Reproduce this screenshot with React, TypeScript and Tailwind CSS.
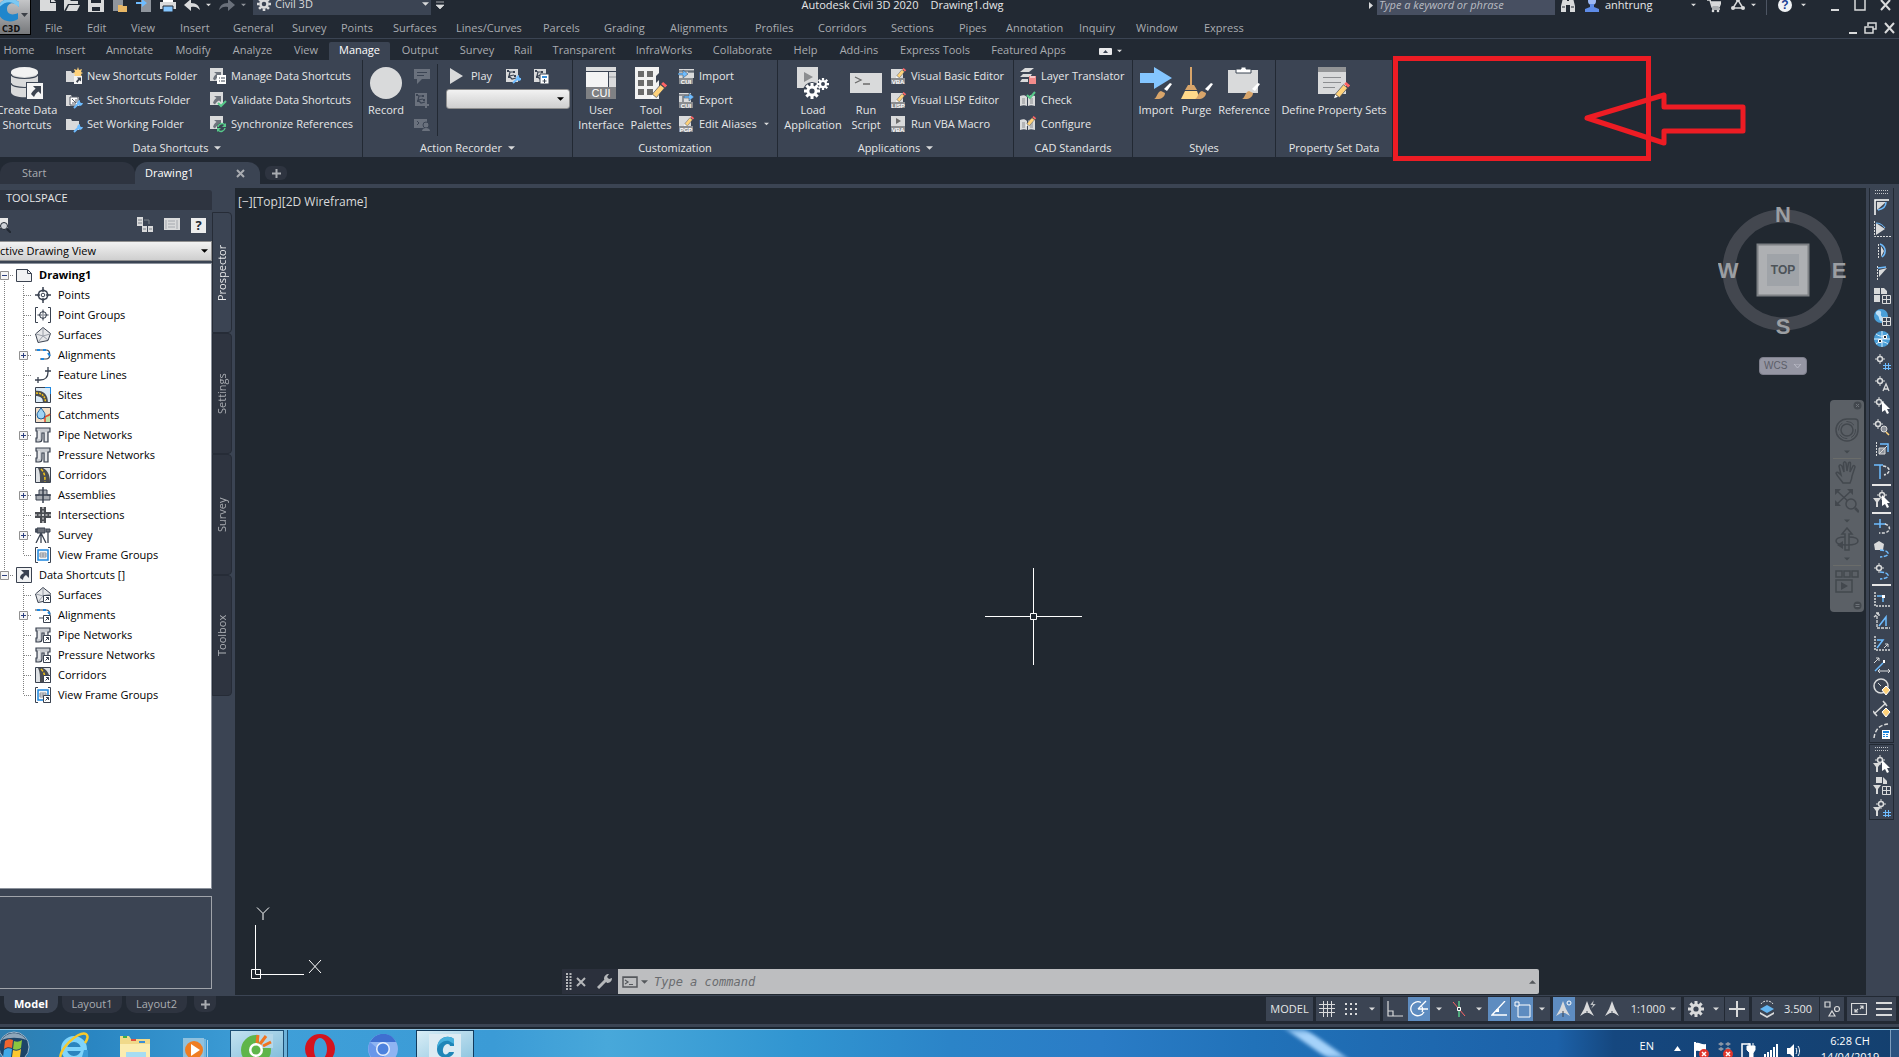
import type { ReactNode } from "react";

const LIGHT = "#d9dadb";
const BLUE = "#6ebcff";
const YELLOW = "#ffd27a";
const GREEN = "#57c98a";
const RED = "#ff6464";
const BROWN = "#d8a56a";
const PANEL = "#3b4453";
const INK = "#3a4250";

type SvgProps = { w?: number; h?: number; box?: string; children: ReactNode; className?: string };

function Svg({ w = 16, h = w, box, children, className = "shrink-0" }: SvgProps) {
  return (
    <svg width={w} height={h} viewBox={box ?? `0 0 ${w} ${h}`} fill="none" className={className} aria-hidden="true">
      {children}
    </svg>
  );
}

function Caret({ color = LIGHT, w = 7 }: { color?: string; w?: number }) {
  return (
    <Svg w={w} h={4} box="0 0 8 4">
      <path d="M0 0h8L4 4z" fill={color} />
    </Svg>
  );
}

/* shared icon parts */

const Pencil = ({ x = 0, y = 0, s = 1 }) => (
  <g transform={`translate(${x} ${y}) scale(${s})`}>
    <path d="M1 9 0 12l3-1z" fill="#fff" />
    <path d="M1 9 7 2l3 2.500-6 7z" fill={YELLOW} stroke={PANEL} strokeWidth=".5" />
    <path d="m7.500 1.500 1.500-1.500 3 2.500-1.500 1.500z" fill={RED} />
  </g>
);

const Wrench = ({ x = 0, y = 0 }) => (
  <g transform={`translate(${x} ${y})`}>
    <path d="M0 8l4-4" stroke={BLUE} strokeWidth="2" />
    <path d="M3 3l1-2 2-1v2l1 1h2l-1 2-2 1-2-1z" fill={BLUE} />
  </g>
);

const Brush = ({ x = 0, y = 0 }) => (
  <g transform={`translate(${x} ${y})`}>
    <path d="M10 6 16 0l2 1-5 7z" fill="#fff" />
    <path d="M0 16c3-1 3-7 7-8l4 2c0 4-4 7-11 6z" fill={BROWN} />
  </g>
);

const Shortcut = ({ x = 0, y = 0, s = 1 }) => (
  <g transform={`translate(${x} ${y}) scale(${s})`}>
    <path d="M0 0h8v8H0z" fill="#f4f4f4" />
    <path d="M3 1.500h4v4L5.700 4.300C4.500 5 4 6 3.500 7L2 5.500C2.500 4.500 3.500 3.500 4.300 2.900z" fill="#3d4450" />
  </g>
);

const Tag = ({ text, w = 16 }: { text: string; w?: number }) => (
  <>
    <path d={`M1 10h${w - 2}v6H1z`} fill="#8b8d90" />
    <text x={w / 2} y="15.500" fontSize="6" fontWeight="700" textAnchor="middle" fill="#fff" fontFamily="Liberation Sans">
      {text}
    </text>
  </>
);

const Folder = () => <path d="M0 3h5l1 2h7v9H0z" fill={LIGHT} />;
const Sheet = () => <path d="M0 0h13v13H0z" fill={LIGHT} />;
const RefArrow = () => <path d="M4 4h7v6L9 8.500c-2 1-3 2-4 4L3 11c1-3 2-4 3.500-5z" fill="#6e747d" />;
const Macro = ({ color = LIGHT }) => (
  <>
    <path d="M1 1h12v13H1z" fill={color} />
    <path d="M3 3l2 1 4 0M5 4l-1 4 5-1M4 8l3 3 4-1" stroke={PANEL} strokeWidth="1.200" />
    <path d="M2 2h2v2H2zM8 3h2v2H8zM3 8h2v2H3zM9 7h2v2H9z" fill={PANEL} />
  </>
);
const Book = () => (
  <>
    <path d="M0 4c3-1 5-1 7 1v9c-2-1-4-1-7 0zM15 4c-3-1-5-1-7 1v9c2-1 4-1 7 0z" fill={LIGHT} />
    <path d="M2 7h3M2 9h3M2 11h3M10 7h3M10 9h3M10 11h3" stroke="#8b8d90" />
  </>
);
const Gear = ({ x = 8, y = 8, s = 1, fill = LIGHT, hole = PANEL }) => (
  <g transform={`translate(${x} ${y}) scale(${s})`}>
    <path
      d="M-1.500-8h3v3h-3zM-1.500 5h3v3h-3zM-8-1.500h3v3h-3zM5-1.500h3v3H5zM-6.700-4.600l2.100-2.100 2.100 2.100-2.100 2.100zM2.500-4.600l2.100-2.100 2.100 2.100-2.100 2.100zM-6.700 4.600l2.100 2.100 2.100-2.100-2.100-2.100zM2.500 4.600l2.100 2.100 2.100-2.100-2.100-2.100z"
      fill={fill}
    />
    <circle r="5.500" fill={fill} />
    <circle r="2.600" fill={hole} />
  </g>
);

const small: Record<string, ReactNode> = {
  newFolder: (
    <>
      <Folder />
      <path d="m12-1 1 3 3-1-1 3 2 1-2 1 1 3-3-1-1 3-1-3-3 1 1-3-2-1 2-1-1-3 3 1z" fill={YELLOW} />
      <Shortcut x={8} y={8} />
    </>
  ),
  setFolder: (
    <>
      <Folder />
      <path d="M4 5h8v8H4z" fill="#fff" stroke="#555b66" />
      <path d="M6 7l4 4M10 7v4H6" stroke="#555b66" />
      <Wrench x={8} y={8} />
    </>
  ),
  workFolder: (
    <>
      <Folder />
      <Wrench x={8} y={8} />
    </>
  ),
  manage: (
    <>
      <Sheet />
      <RefArrow />
      <path d="M7 7h9v9H7z" fill="#fff" />
      <path d="M9 10h1M11 10h4M9 13h1M11 13h4" stroke={PANEL} />
    </>
  ),
  validate: (
    <>
      <Sheet />
      <RefArrow />
      <path d="m8 11 3 3 5-5" stroke={GREEN} strokeWidth="2" />
    </>
  ),
  sync: (
    <>
      <Sheet />
      <RefArrow />
      <circle cx="11.500" cy="11.500" r="4.500" fill={PANEL} />
      <path d="M8 11a4 4 0 0 1 7-2M15 12a4 4 0 0 1-7 2" stroke={GREEN} strokeWidth="1.500" />
      <path d="M16 7v4h-4zM7 16v-4h4z" fill={GREEN} />
    </>
  ),
  comment: (
    <>
      <path d="M0 1h16v10H8l-5 5v-5H0z" fill="#6a717d" />
      <path d="M3 4.500h10M3 7.500h7" stroke={PANEL} />
    </>
  ),
  macroAdd: (
    <>
      <Macro color="#6a717d" />
      <path d="M12 10v6M9 13h6" stroke="#6a717d" strokeWidth="2" />
    </>
  ),
  userMsg: (
    <>
      <path d="M0 3h13v9H0z" fill="#6a717d" />
      <path d="m3 5 2 2-2 2" stroke={PANEL} />
      <circle cx="12" cy="9" r="3" fill="#6a717d" stroke={PANEL} />
      <path d="M8 15c0-4 8-4 8 0z" fill="#6a717d" />
    </>
  ),
  macroEdit: (
    <>
      <Macro />
      <Wrench x={8} y={7} />
    </>
  ),
  macroPrefs: (
    <>
      <Macro />
      <path d="M7 6h9v10H7z" fill="#fff" stroke={PANEL} />
      <path d="M9 8h5v2H9z" fill="#3b8fd6" />
      <path d="M11.500 11v4M9.500 13h4" stroke={PANEL} />
    </>
  ),
  cuiImport: (
    <>
      <path d="M1 1h15v9H1z" fill={LIGHT} />
      <path d="M1 3h15M10 4h6" stroke={PANEL} />
      <path d="M0 5h5V2l5 4-5 4V7H0z" fill={BLUE} stroke={PANEL} strokeWidth=".5" />
      <Tag text="CUI" />
    </>
  ),
  cuiExport: (
    <>
      <path d="M1 1h12v9H1z" fill={LIGHT} />
      <path d="M1 3h12M5 4v6" stroke={PANEL} />
      <path d="M6 4h5V1l5 4-5 4V6H6z" fill={BLUE} stroke={PANEL} strokeWidth=".5" />
      <Tag text="CUI" />
    </>
  ),
  aliases: (
    <>
      <path d="M1 0h12v10H1z" fill={LIGHT} />
      <Pencil x={6} y={0} s={0.85} />
      <Tag text="PGP" />
    </>
  ),
  vbaEdit: (
    <>
      <path d="M1 1h12v9H1z" fill={LIGHT} />
      <Pencil x={6} y={0} s={0.85} />
      <Tag text="VBA" />
    </>
  ),
  lispEdit: (
    <>
      <path d="M1 1h12v9H1z" fill={LIGHT} />
      <Pencil x={6} y={0} s={0.85} />
      <Tag text="LISP" />
    </>
  ),
  vbaRun: (
    <>
      <path d="M1 0h14v10H1z" fill={LIGHT} />
      <path d="m6 2 5 3-5 3z" fill="#6e6e6e" />
      <Tag text="VBA" />
    </>
  ),
  layers: (
    <>
      <path d="M5 0h9L9 4H0zM3 6h9l-2 3H0zM2 11h6v3H0z" fill={LIGHT} />
      <path d="M9 8h7v8H9z" fill="#f28b8b" />
      <path d="M10 9h5" stroke="#fff" />
    </>
  ),
  check: (
    <>
      <Book />
      <path d="m7 3 3 3 5-6" stroke={GREEN} strokeWidth="2" />
    </>
  ),
  configure: (
    <>
      <Book />
      <Pencil x={6} y={0} s={0.85} />
    </>
  ),
};

const large: Record<string, ReactNode> = {
  database: (
    <>
      <path d="M0 5v20c0 7 27 7 27 0V5z" fill={LIGHT} />
      <ellipse cx="13.500" cy="5" rx="13.500" ry="5" fill="#f2f2f2" />
      <path d="M0 7c0 6 27 6 27 0M0 16c0 6 27 6 27 0" stroke={PANEL} strokeWidth="1.200" />
      <path d="M15 15h17v17H15z" fill={PANEL} />
      <Shortcut x={16} y={16} s={2} />
    </>
  ),
  record: <circle cx="16" cy="16" r="16" fill={LIGHT} />,
  cui: (
    <>
      <path d="M1 0h30v4H1zM24 5h7v15h-7z" fill={LIGHT} />
      <path d="M1 5h22v15H1z" fill="#f4f4f4" />
      <path d="M24 10h7" stroke="#9a9da1" />
      <path d="M1 20h30v12H1z" fill="#7f8184" />
      <text x="16" y="30" fontSize="11" textAnchor="middle" fill="#fff" fontFamily="Liberation Sans">
        CUI
      </text>
    </>
  ),
  palettes: (
    <>
      <path d="M0 0h24v32H0z" fill="#f2f2f2" />
      <path
        d="M3 4h6v6H3zM12 4h6v6h-6zM3 13h6v6H3zM12 13h6v6h-6zM3 22h6v6H3zM12 22h6v6h-6z"
        fill="#6b6b6b"
      />
      <path d="M24 6v7l-3 3V9z" fill={PANEL} />
      <Pencil x={16} y={15} s={1.35} />
    </>
  ),
  loadApp: (
    <>
      <path d="M0 0h21v21H0z" fill={LIGHT} />
      <path d="m7 5 9 5-9 5z" fill="#8b8d90" />
      <circle cx="15" cy="24" r="9" fill={PANEL} />
      <Gear x={15} y={24} s={1} fill="#fff" />
      <Gear x={26} y={17} s={0.75} fill="#fff" />
    </>
  ),
  script: (
    <>
      <path d="M0 6h32v20H0z" fill={LIGHT} />
      <path d="m5 10 6 3-6 3M13 17h7" stroke="#6b6b6b" strokeWidth="1.300" />
    </>
  ),
  styleImport: (
    <>
      <path d="M0 6h14V0l18 11-18 11v-6H0z" fill="#84c6ff" />
      <Brush x={14} y={16} />
    </>
  ),
  purge: (
    <>
      <path d="M9 0h2v18H9z" fill={BROWN} />
      <path d="M7 18h6l3 5H4z" fill={BROWN} />
      <path d="M4 24h12l3 8H0z" fill="#ffd98a" />
      <Brush x={14} y={16} />
    </>
  ),
  reference: (
    <>
      <path d="M0 3h30v23H0z" fill={LIGHT} />
      <path d="M8 2h5V0h5v2h5v4H8z" fill="#fff" stroke={PANEL} />
      <Brush x={14} y={16} />
    </>
  ),
  propSets: (
    <>
      <path d="M0 0h28v27H0z" fill={LIGHT} />
      <path d="M0 0h28v5H0z" fill="#929496" />
      <path d="M5 10.500h18M5 15.500h18M5 20.500h12" stroke="#8b8d90" />
      <Pencil x={16} y={15} s={1.35} />
    </>
  ),
};

/* title bar */

const quick: [string, ReactNode][] = [
  ["New", <path key="n" d="M0 0h10v6h6v8H0zM11 0l5 5h-5z" fill={LIGHT} />],
  ["Open", <path key="o" d="M0 14V2h5l2 2h7v3H4zM5 8h11l-3 6H2z" fill={LIGHT} />],
  ["Save", <path key="s" d="M0 0h16v15H0zM3 1v5h10V1zM4 10v4h8v-4z" fill={LIGHT} fillRule="evenodd" />],
  [
    "Save As",
    <g key="a">
      <path d="M1 0h10v14H1z" fill="#8f959d" />
      <path d="M6 8h4l1 1h4v6H6z" fill="#e9b765" />
    </g>,
  ],
  [
    "Open from Web",
    <g key="w">
      <path d="M5 0h10v15H5z" fill="#8f959d" />
      <path d="M0 5h6V2l5 4-5 4V7H0z" fill={BLUE} />
    </g>,
  ],
  [
    "Plot",
    <g key="p">
      <path d="M3 0h10v5H3z" fill="#fff" />
      <path d="M0 5h16v7H0z" fill={LIGHT} />
      <path d="M3 9h10v6H3z" fill="#84c6ff" stroke="#222933" />
    </g>,
  ],
];

function TitleBar() {
  return (
    <div className="flex h-6 items-center">
      <div className="ml-[9px] flex items-center gap-2">
        {quick.map(([name, art]) => (
          <button key={name} aria-label={name}>
            <Svg>{art}</Svg>
          </button>
        ))}
      </div>
      <button aria-label="Undo" className="ml-2 flex items-center gap-[6px]">
        <Svg>
          <path d="M7 2v4c6 0 8 3 9 7-3-3-5-4-9-3v4L0 8z" fill={LIGHT} />
        </Svg>
        <Caret w={5} />
      </button>
      <button aria-label="Redo" className="ml-2 flex items-center gap-[6px]">
        <Svg>
          <path d="M9 2v4c-6 0-8 3-9 7 3-3 5-4 9-3v4l7-6z" fill="#6a707a" />
        </Svg>
        <Caret w={5} color="#8d9198" />
      </button>
      <label className="relative ml-[7px] flex h-[22px] w-[178px] items-center self-start bg-[#3b4453] pl-1">
        <Svg w={14} box="0 0 16 16">
          <Gear />
        </Svg>
        <select aria-label="Workspace" className="w-full appearance-none bg-transparent pl-1 text-[#d9dadb]">
          <option>Civil 3D</option>
        </select>
        <span className="absolute right-[2px]">
          <Caret />
        </span>
      </label>
      <button aria-label="Customize Quick Access Toolbar" className="ml-[5px]">
        <Svg w={8} h={8}>
          <path d="M0 1h8M0 4h8L4 8z" fill={LIGHT} stroke={LIGHT} strokeWidth=".7" />
        </Svg>
      </button>
      <h1 className="flex flex-1 justify-center gap-3 pr-2 text-[#e6e7e8]">
        <span>Autodesk Civil 3D 2020</span>
        <span>Drawing1.dwg</span>
      </h1>
      <Svg w={4} h={7} className="mr-1 shrink-0">
        <path d="m0 0 4 3.500L0 7z" fill={LIGHT} />
      </Svg>
      <input
        aria-label="Search"
        placeholder="Type a keyword or phrase"
        className="h-[22px] w-[178px] self-start bg-[#474f61] px-[2px] italic placeholder:text-[#b9bcc2]"
      />
      <button aria-label="Find" className="ml-[6px]">
        <Svg w={14} h={16}>
          <path d="M2 1h4v3h2V1h4l2 8v6H9V8H5v7H0V9z" fill={LIGHT} />
          <path d="M1 10h3M10 10h3" stroke="#222933" />
        </Svg>
      </button>
      <button className="ml-[10px] flex items-center gap-[6px] text-[#e6e7e8]">
        <Svg w={14} h={16}>
          <circle cx="7" cy="4" r="4" fill="#9db9f5" />
          <path d="M5 7h4v3l5 2v3H0v-3l5-2z" fill="#5f8ce8" />
        </Svg>
        <span className="w-20 text-left">anhtrung</span>
        <Caret w={5} />
      </button>
      <button aria-label="App Store" className="ml-[11px]">
        <Svg w={14} h={16}>
          <path d="M0 3h3l2 7h7l2-5H4M5 12h8" stroke={LIGHT} strokeWidth="1.500" />
          <path d="M4 5h10l-2 4H5z" fill={LIGHT} />
          <circle cx="6" cy="14" r="1.300" fill={LIGHT} />
          <circle cx="11" cy="14" r="1.300" fill={LIGHT} />
        </Svg>
      </button>
      <button aria-label="Stay Connected" className="ml-[10px] flex items-center gap-[6px]">
        <Svg w={14} h={16}>
          <path d="M7 3 2 11h10z" stroke={LIGHT} strokeWidth="1.500" />
          <circle cx="7" cy="3" r="2" fill={LIGHT} />
          <circle cx="2" cy="11" r="2" fill={LIGHT} />
          <circle cx="12" cy="11" r="2" fill={LIGHT} />
        </Svg>
        <Caret w={5} />
      </button>
      <span className="ml-[10px] h-5 w-px bg-[#4d5563]" />
      <button aria-label="Help" className="ml-[11px] flex items-center gap-[9px]">
        <Svg w={14} h={16}>
          <circle cx="7" cy="8" r="7" fill="#f0f2f5" />
          <text x="7" y="12" fontSize="12" fontWeight="700" textAnchor="middle" fill="#1c3f94" fontFamily="Liberation Sans">
            ?
          </text>
        </Svg>
        <Caret w={5} />
      </button>
      <div className="ml-6 mr-2 flex items-center gap-[14px]">
        <button aria-label="Minimize">
          <Svg w={10} h={14}>
            <path d="M1 12h8" stroke={LIGHT} strokeWidth="2" />
          </Svg>
        </button>
        <button aria-label="Maximize">
          <Svg w={12} h={14}>
            <path d="M1 1h10v11H1z" stroke={LIGHT} strokeWidth="1.500" />
          </Svg>
        </button>
        <button aria-label="Close">
          <Svg w={11} h={14}>
            <path d="m1 2 9 10M10 2 1 12" stroke={LIGHT} strokeWidth="2" />
          </Svg>
        </button>
      </div>
    </div>
  );
}

const menus: [string, string][] = [
  ["File", "w-[42px]"],
  ["Edit", "w-[44px]"],
  ["View", "w-[49px]"],
  ["Insert", "w-[53px]"],
  ["General", "w-[59px]"],
  ["Survey", "w-[49px]"],
  ["Points", "w-[52px]"],
  ["Surfaces", "w-[63px]"],
  ["Lines/Curves", "w-[87px]"],
  ["Parcels", "w-[61px]"],
  ["Grading", "w-[66px]"],
  ["Alignments", "w-[85px]"],
  ["Profiles", "w-[63px]"],
  ["Corridors", "w-[73px]"],
  ["Sections", "w-[68px]"],
  ["Pipes", "w-[47px]"],
  ["Annotation", "w-[73px]"],
  ["Inquiry", "w-[57px]"],
  ["Window", "w-[68px]"],
  ["Express", "w-[60px]"],
];

function MenuBar() {
  return (
    <nav className="flex h-[21px] items-center pl-[14px] pt-px">
      {menus.map(([label, w]) => (
        <button key={label} className={`${w} shrink-0 text-left text-[#a9acb1]`}>
          {label}
        </button>
      ))}
      <div className="ml-auto mr-1 flex items-center gap-[7px]">
        <button aria-label="Minimize drawing">
          <Svg w={8} h={12}>
            <path d="M0 11h8" stroke={LIGHT} strokeWidth="2" />
          </Svg>
        </button>
        <button aria-label="Restore drawing">
          <Svg w={13} h={12}>
            <path d="M4 4V1h8v6H9M1 5h8v6H1z" stroke={LIGHT} strokeWidth="1.500" />
          </Svg>
        </button>
        <button aria-label="Close drawing">
          <Svg w={11} h={12}>
            <path d="m1 1 9 10M10 1 1 11" stroke={LIGHT} strokeWidth="2" />
          </Svg>
        </button>
      </div>
    </nav>
  );
}

function Header() {
  return (
    <header className="-mt-[7px] flex shrink-0 border-b border-[#3b4453]">
      <button
        aria-label="Application menu"
        className="flex h-[42px] w-[31px] shrink-0 border-b border-r border-black bg-linear-to-b from-[#d5d6d8] to-[#77797c]"
      >
        <Svg w={30} h={41}>
          <path d="M19 9C8 2-3 8-2 18c1 10 13 13 20 8v-6c-6 3-11 1-11-4s6-9 12-2z" fill="#1f86cc" />
          <path d="M19 9C10 2-1 7-2 16c4-6 10-8 15-6l6 4z" fill="#7cc8f2" />
          <path d="M21 20h7l-3.500 4z" fill="#3c4047" />
          <text x="2" y="39" fontSize="8" fontWeight="700" fill="#111" fontFamily="DejaVu Sans">
            C3D
          </text>
        </Svg>
      </button>
      <div className="min-w-0 flex-1">
        <TitleBar />
        <MenuBar />
      </div>
    </header>
  );
}

/* ribbon */

const ribbonTabs: [string, string][] = [
  ["Home", "w-[46px] pr-2"],
  ["Insert", "w-[49px]"],
  ["Annotate", "w-[69px]"],
  ["Modify", "w-[58px]"],
  ["Analyze", "w-[61px]"],
  ["View", "w-[46px]"],
  ["Manage", "w-[61px]"],
  ["Output", "w-[60px]"],
  ["Survey", "w-[54px]"],
  ["Rail", "w-[38px]"],
  ["Transparent", "w-[84px]"],
  ["InfraWorks", "w-[76px]"],
  ["Collaborate", "w-[81px]"],
  ["Help", "w-[45px]"],
  ["Add-ins", "w-[62px]"],
  ["Express Tools", "w-[90px]"],
  ["Featured Apps", "w-[97px]"],
];

function RibbonTabs() {
  return (
    <div role="tablist" className="flex h-[21px] shrink-0 items-end">
      {ribbonTabs.map(([label, w]) => (
        <button
          key={label}
          role="tab"
          aria-selected={label === "Manage"}
          className={`${w} h-[18px] shrink-0 rounded-t-[2px] pb-[2px] text-center ${
            label === "Manage" ? "bg-[#3b4453] text-white" : "text-[#a9acb1]"
          }`}
        >
          {label}
        </button>
      ))}
      <button aria-label="Minimize ribbon" className="ml-[22px] flex h-[18px] items-center gap-[5px]">
        <Svg w={13} h={7}>
          <rect width="13" height="7" rx="1" fill="#e9e9eb" />
          <path d="m4 5 2.500-3L9 5z" fill={PANEL} />
        </Svg>
        <Caret w={5} />
      </button>
    </div>
  );
}

function Panel({ title, width, caret, children }: { title: string; width: string; caret?: boolean; children: ReactNode }) {
  return (
    <section className={`${width} flex shrink-0 flex-col bg-[#3b4453]`}>
      <div className="flex h-19 pt-1">{children}</div>
      <h2 className="flex h-[21px] items-center justify-center gap-[6px] whitespace-nowrap pt-[2px]">
        {title}
        {caret && <Caret />}
      </h2>
    </section>
  );
}

function Big({ icon, lines, width }: { icon: string; lines: string[]; width: string }) {
  return (
    <button className={`${width} flex shrink-0 flex-col items-center whitespace-nowrap pt-[3px] leading-[15px]`}>
      <Svg w={32} className="mb-[3px] shrink-0">
        {large[icon]}
      </Svg>
      {lines.map((l) => (
        <span key={l}>{l}</span>
      ))}
    </button>
  );
}

function SmallList({ items, width }: { items: [string, string][]; width: string }) {
  return (
    <div className={`${width} shrink-0`}>
      {items.map(([icon, label]) => (
        <button key={label} className="flex h-6 items-center gap-[5px] whitespace-nowrap">
          <Svg className="shrink-0 overflow-visible">{small[icon]}</Svg>
          {label}
          {label === "Edit Aliases" && (
            <span className="ml-[2px]">
              <Caret w={5} />
            </span>
          )}
        </button>
      ))}
    </div>
  );
}

function Ribbon() {
  return (
    <div className="relative flex h-[97px] shrink-0 gap-px text-[#e6e7e8]">
      <Panel title="Data Shortcuts" width="-ml-2 w-[370px]" caret>
        <div className="w-[7px]" />
        <Big icon="database" lines={["Create Data", "Shortcuts"]} width="w-[56px]" />
        <div className="w-[11px]" />
        <SmallList
          width="w-36"
          items={[
            ["newFolder", "New Shortcuts Folder"],
            ["setFolder", "Set Shortcuts Folder"],
            ["workFolder", "Set Working Folder"],
          ]}
        />
        <SmallList
          width="w-36"
          items={[
            ["manage", "Manage Data Shortcuts"],
            ["validate", "Validate Data Shortcuts"],
            ["sync", "Synchronize References"],
          ]}
        />
      </Panel>
      <Panel title="Action Recorder" width="w-[209px]" caret>
        <Big icon="record" lines={["Record"]} width="w-[46px]" />
        <div className="flex w-[26px] flex-col items-center">
          {["comment", "macroAdd", "userMsg"].map((n) => (
            <button key={n} aria-label={n} disabled className="flex h-6 items-center">
              <Svg>{small[n]}</Svg>
            </button>
          ))}
        </div>
        <div className="ml-[2px] h-18 w-px bg-[#222933]" />
        <div className="pl-2">
          <div className="flex h-6 items-center">
            <button className="flex items-center gap-2 pl-1">
              <Svg w={13} h={16}>
                <path d="m0 0 13 8-13 8z" fill={LIGHT} />
              </Svg>
              <span className="w-[34px] text-left">Play</span>
            </button>
            <button aria-label="Preference" className="mr-3">
              <Svg>{small.macroEdit}</Svg>
            </button>
            <button aria-label="Manage action macros">
              <Svg>{small.macroPrefs}</Svg>
            </button>
          </div>
          <label className="relative mt-px flex h-5 w-[124px] items-center">
            <select
              aria-label="Action macros"
              className="h-full w-full appearance-none rounded-[3px] border border-[#8f8f8f] bg-linear-to-b from-[#f2f2f2] to-[#cfcfcf]"
            />
            <span className="pointer-events-none absolute right-[6px]">
              <Caret color="#000" />
            </span>
          </label>
        </div>
      </Panel>
      <Panel title="Customization" width="w-[204px]">
        <Big icon="cui" lines={["User", "Interface"]} width="w-[56px]" />
        <Big icon="palettes" lines={["Tool", "Palettes"]} width="w-[44px]" />
        <div className="w-[5px]" />
        <SmallList
          width="w-24"
          items={[
            ["cuiImport", "Import"],
            ["cuiExport", "Export"],
            ["aliases", "Edit Aliases"],
          ]}
        />
      </Panel>
      <Panel title="Applications" width="w-[235px]" caret>
        <Big icon="loadApp" lines={["Load", "Application"]} width="w-[70px]" />
        <Big icon="script" lines={["Run", "Script"]} width="w-[36px]" />
        <div className="w-[6px]" />
        <SmallList
          width="w-30"
          items={[
            ["vbaEdit", "Visual Basic Editor"],
            ["lispEdit", "Visual LISP Editor"],
            ["vbaRun", "Run VBA Macro"],
          ]}
        />
      </Panel>
      <Panel title="CAD Standards" width="w-[118px]">
        <div className="w-[6px]" />
        <SmallList
          width="w-28"
          items={[
            ["layers", "Layer Translator"],
            ["check", "Check"],
            ["configure", "Configure"],
          ]}
        />
      </Panel>
      <Panel title="Styles" width="w-[142px]">
        <Big icon="styleImport" lines={["Import"]} width="w-[46px]" />
        <Big icon="purge" lines={["Purge"]} width="w-[35px]" />
        <Big icon="reference" lines={["Reference"]} width="w-[60px]" />
      </Panel>
      <Panel title="Property Set Data" width="w-[116px]">
        <Big icon="propSets" lines={["Define Property Sets"]} width="w-[116px]" />
      </Panel>
      {/* markup drawn over the empty end of the ribbon */}
      <Svg w={353} h={106} className="pointer-events-none absolute -top-1 left-[1393px] z-10">
        <path d="M2.500 2.500h253v100h-253z" stroke="#ed1c24" strokeWidth="5" />
        <path
          d="M194 62 271 39v12h79v24h-79v12z"
          stroke="#ed1c24"
          strokeWidth="5"
          strokeLinejoin="round"
        />
      </Svg>
    </div>
  );
}

function DocTabs() {
  return (
    <div className="flex h-[31px] shrink-0 items-end border-b-4 border-[#3b4453]">
      <button className="h-[22px] w-[135px] rounded-t-[12px] bg-[#2e3440] pl-[22px] text-left text-[#a9acb1]">Start</button>
      <div className="flex h-[22px] w-[125px] items-center justify-between rounded-t-[12px] bg-[#3b4453] pl-[10px] pr-[15px] text-white">
        <button>Drawing1</button>
        <button aria-label="Close Drawing1">
          <Svg w={9}>
            <path d="m1 1 7 7M8 1 1 8" stroke="#a9acb1" strokeWidth="2" />
          </Svg>
        </button>
      </div>
      <button aria-label="New drawing" className="mb-1 ml-[5px] flex h-[14px] w-[22px] items-center justify-center rounded-[6px] bg-[#2e3440]">
        <Svg w={9}>
          <path d="M4.500 0v9M0 4.500h9" stroke="#a9acb1" strokeWidth="2" />
        </Svg>
      </button>
    </div>
  );
}

/* toolspace */

const Link = () => (
  <g transform="translate(8.500 8.500)">
    <path d="M0 0h7v7H0z" fill="#fff" stroke={INK} />
    <path d="M2 5 5 2M2.500 2H5v2.500" stroke={INK} />
  </g>
);
const SurfaceArt = () => (
  <>
    <path d="M8 .5 15.500 6.500 13 13.500 3 15.500.5 7z" fill="#e6e7e9" stroke={INK} />
    <path d="M8 1v8M1 7l7 2 7-2M3 15l5-6 5 4" stroke="#9a9fa8" />
  </>
);
const AlignArt = () => (
  <>
    <path d="M0 3h11c5 0 5 9 0 9H5" stroke={INK} strokeWidth="1.200" />
    <path d="M2 3h3M8 3h3M13 6l2 3M6 12h3" stroke="#1c87e0" strokeWidth="2" />
  </>
);
const PipeArt = () => (
  <>
    <path d="M1 1h14v4h-2v10H9V6H7v6c0 2-1 3-3 3H1v-4h1V4H1z" fill="#c9ccd1" stroke={INK} strokeWidth="1.200" />
    <path d="M4 4v8M11 5v9" stroke="#fff" />
  </>
);
const RoadArt = () => (
  <>
    <path d="M.5.5h15v15H.5z" fill="#dfe2e5" stroke={INK} />
    <path d="M3 1h5c6 3 7 9 7 14H5c0-6 0-10-2-14z" fill="#4a4d52" />
    <path d="M6 2c4 4 4 8 4 13" stroke="#f5c518" strokeWidth="1.500" strokeDasharray="3 1.500" />
  </>
);
const FrameArt = () => (
  <>
    <path d="M3 .5H.5v15H3M13 .5h2.500v15H13" stroke={INK} />
    <path d="M3 3h10v10H3z" fill="#f2f4f6" stroke="#1c87e0" strokeWidth="1.500" />
    <path d="M5 6h6v4H5zM5 8h6M8 6v4" stroke="#8b9099" />
  </>
);
const PointArt = () => (
  <>
    <path d="M8 0v5M8 11v5M0 8h5M11 8h5" stroke={INK} strokeWidth="1.500" />
    <path d="m8 3 3.500 1.500L13 8l-1.500 3.500L8 13l-3.500-1.500L3 8l1.500-3.500z" stroke={INK} strokeWidth="1.500" />
    <circle cx="8" cy="8" r="1.800" stroke={INK} />
  </>
);

const treeIcons: Record<string, ReactNode> = {
  drawing: (
    <>
      <path d="M.5 2.500h11l4 4v8H.5z" fill="#f1f2f3" stroke={INK} />
      <path d="M11.500 2.500v4h4" stroke={INK} />
    </>
  ),
  shortcuts: (
    <>
      <path d="M.5.5h15v15H.5z" fill="#f1f2f3" stroke={INK} />
      <path d="M5 3h8v8l-3-3c-2 1-3 3-3 5L4 11c0-3 2-4 4-5z" fill={INK} />
    </>
  ),
  points: <PointArt />,
  groups: (
    <>
      <path d="M3 .5H.5v15H3M13 .5h2.500v15H13" stroke={INK} />
      <g transform="translate(2.400 2.400) scale(.7)">
        <PointArt />
      </g>
    </>
  ),
  surface: <SurfaceArt />,
  align: <AlignArt />,
  feature: (
    <>
      <path d="M0 13h5c5 0 8-3 8-8V0" stroke={INK} strokeWidth="1.300" />
      <path d="M3 10v6M10 4h6" stroke={INK} strokeWidth="1.300" />
    </>
  ),
  sites: (
    <>
      <path d="M.5.5h15v15H.5z" fill="#dcebf7" stroke={INK} />
      <path d="M0 4c8-1 13 3 13 12H8C8 11 6 9 0 9z" fill="#4a4d52" />
      <path d="M1 6c6 0 9 3 9.500 9" stroke="#f5c518" strokeWidth="1.500" strokeDasharray="2 1" />
      <path d="M10 0h6v7" stroke="#1c87e0" strokeWidth="2" />
    </>
  ),
  catchment: (
    <>
      <path d="M.5.5h15v15H.5z" fill="#f3dfc8" stroke={INK} />
      <path d="M10 15V9l5-3v9z" fill="#bfe0a8" />
      <path d="M8 12c2-4 5-2 7-5M10 9v6" stroke="#e0492f" strokeWidth="1.500" />
      <path d="M6 1c3 4 4 5 4 7a4 4 0 0 1-8 0c0-2 1-3 4-7z" fill="#9fd3f5" stroke="#1b5f9c" />
    </>
  ),
  pipe: <PipeArt />,
  road: <RoadArt />,
  assembly: (
    <>
      <path d="M4 3h8v5h3v5H1V8h3z" fill="#a9adb3" stroke={INK} />
      <path d="M8 0v16M0 8h16" stroke={INK} strokeWidth="1.500" />
    </>
  ),
  intersection: (
    <>
      <path d="M5 0h6v5h5v6h-5v5H5v-5H0V5h5z" fill="#4a4d52" />
      <path d="M8 0v16M0 8h16" stroke="#fff" strokeDasharray="2 1.500" />
    </>
  ),
  survey: (
    <>
      <path d="M2 1h8v5H2zM11 2h4v3h-4zM0 2h2v3H0z" fill="#6b7079" stroke={INK} />
      <path d="M6 6 1 16M6 6v10M6 6l5 10M13 5v11" stroke={INK} strokeWidth="1.300" />
    </>
  ),
  frame: <FrameArt />,
  surfaceRef: (
    <>
      <SurfaceArt />
      <Link />
    </>
  ),
  alignRef: (
    <>
      <path d="M0 3h11c3 0 4 2 4 5M4 11h4" stroke={INK} strokeWidth="1.200" />
      <path d="M2 3h3M8 3h3M13 5l2 2" stroke="#1c87e0" strokeWidth="2" />
      <Link />
    </>
  ),
  pipeRef: (
    <>
      <PipeArt />
      <Link />
    </>
  ),
  roadRef: (
    <>
      <RoadArt />
      <Link />
    </>
  ),
  frameRef: (
    <>
      <FrameArt />
      <Link />
    </>
  ),
};

type Node = { label: string; icon: string; plus?: boolean; last?: boolean };

const drawingNodes: Node[] = [
  { label: "Points", icon: "points" },
  { label: "Point Groups", icon: "groups" },
  { label: "Surfaces", icon: "surface" },
  { label: "Alignments", icon: "align", plus: true },
  { label: "Feature Lines", icon: "feature" },
  { label: "Sites", icon: "sites" },
  { label: "Catchments", icon: "catchment" },
  { label: "Pipe Networks", icon: "pipe", plus: true },
  { label: "Pressure Networks", icon: "pipe" },
  { label: "Corridors", icon: "road" },
  { label: "Assemblies", icon: "assembly", plus: true },
  { label: "Intersections", icon: "intersection" },
  { label: "Survey", icon: "survey", plus: true },
  { label: "View Frame Groups", icon: "frame", last: true },
];

const shortcutNodes: Node[] = [
  { label: "Surfaces", icon: "surfaceRef" },
  { label: "Alignments", icon: "alignRef", plus: true },
  { label: "Pipe Networks", icon: "pipeRef" },
  { label: "Pressure Networks", icon: "pipeRef" },
  { label: "Corridors", icon: "roadRef" },
  { label: "View Frame Groups", icon: "frameRef", last: true },
];

function Branch({ label, icon, bold, nodes, trunk }: { label: string; icon: string; bold?: boolean; nodes: Node[]; trunk?: boolean }) {
  return (
    <li>
      <div className="flex h-5 items-center">
        <Svg w={16} h={20}>
          <path d={trunk ? "M4.500 10v10M10 10.500h4" : "M4.500 0v10M10 10.500h4"} stroke="#808080" strokeDasharray="1 1" />
          <path d="M.5 6.500h8v8h-8z" fill="#f5f5f5" stroke="#919191" />
          <path d="M2 10.500h5" stroke="#2b3f7e" />
        </Svg>
        <Svg>{treeIcons[icon]}</Svg>
        <span className={`pl-[7px] ${bold ? "font-bold" : ""}`}>{label}</span>
      </div>
      <ul>
        {nodes.map((n) => (
          <li key={n.label} className="flex h-5 items-center">
            <Svg w={35} h={20}>
              {trunk && <path d="M4.500 0v20" stroke="#808080" strokeDasharray="1 1" />}
              <path d={`M23.500 0v${n.last ? 10 : 20}M24 10.500h8`} stroke="#808080" strokeDasharray="1 1" />
              {n.plus && (
                <>
                  <path d="M19.500 6.500h8v8h-8z" fill="#f5f5f5" stroke="#919191" />
                  <path d="M21 10.500h5M23.500 8v5" stroke="#2b3f7e" />
                </>
              )}
            </Svg>
            <Svg>{treeIcons[n.icon]}</Svg>
            <span className="pl-[7px]">{n.label}</span>
          </li>
        ))}
      </ul>
    </li>
  );
}

function Toolspace() {
  return (
    <aside className="flex w-[235px] shrink-0 pb-[6px] pt-[2px]">
      <div className="flex w-[212px] flex-col">
        <h2 className="h-5 rounded-tr-[3px] bg-[#2e3440] pl-[6px] leading-4 text-[#e6e7e8]">TOOLSPACE</h2>
        <div className="flex h-[31px] items-center gap-[11px] pb-px pr-[6px]">
          <button aria-label="Preview">
            <Svg w={11} h={16}>
              <path d="M0 1h8v10H0z" fill="#e8e8e8" />
              <circle cx="4" cy="9" r="3.500" fill="#cfd3d8" stroke="#222933" />
              <path d="m7 12 4 4" stroke="#222933" strokeWidth="2" />
            </Svg>
          </button>
          <button aria-label="Panorama" className="ml-auto">
            <Svg>
              <path d="M0 0h6v9H0zM5 9h5v6H5zM11 9h5v6h-5z" fill={LIGHT} />
              <path d="M1 3h4M1 6h4M7 3h5v4M6 12h3M12 12h3" stroke="#7b8088" />
            </Svg>
          </button>
          <button aria-label="Item view">
            <Svg>
              <path d="M0 1h16v12H0z" fill={LIGHT} />
              <path d="M2 3v9M4 4h7M4 7h7M4 10h7M13 3v9" stroke="#a4a8ae" />
            </Svg>
          </button>
          <button aria-label="Help" className="flex h-[15px] w-[15px] items-center justify-center bg-[#eceded] text-[13px] font-bold text-[#222933]">
            ?
          </button>
        </div>
        <label className="relative flex h-5 items-center overflow-hidden">
          <select
            aria-label="View"
            className="-ml-[10px] h-full w-[222px] shrink-0 appearance-none border border-[#8f8f8f] bg-linear-to-b from-[#f2f2f2] to-[#cfcfcf] pl-[2px] text-black"
          >
            <option>Active Drawing View</option>
          </select>
          <span className="pointer-events-none absolute right-1">
            <Caret color="#000" />
          </span>
        </label>
        <ul className="mt-[2px] flex-1 border-y border-r border-[#8b919b] bg-white pt-px text-black">
          <Branch label="Drawing1" icon="drawing" bold nodes={drawingNodes} trunk />
          <Branch label="Data Shortcuts []" icon="shortcuts" nodes={shortcutNodes} />
        </ul>
        <div className="mt-[7px] h-[93px] border-y border-r border-[#a0a4aa]" />
      </div>
      <div role="tablist" className="flex w-5 flex-col pt-[22px]">
        {["Prospector", "Settings", "Survey", "Toolbox"].map((t, i) => (
          <button
            key={t}
            role="tab"
            aria-selected={i === 0}
            className={`flex h-[121px] w-5 rotate-180 items-center justify-center rounded-l-[4px] border border-[#262c37] [writing-mode:vertical-rl] ${
              i === 0 ? "bg-[#3b4453] text-[#e6e7e8]" : "bg-[#2e3440] text-[#a9acb1]"
            }`}
          >
            {t}
          </button>
        ))}
      </div>
    </aside>
  );
}

/* drawing area */

function ViewCube() {
  return (
    <div className="absolute right-[18px] top-[18px] flex flex-col items-center">
      <Svg w={130} h={130}>
        <circle cx="65" cy="64" r="54" stroke="#43474f" strokeWidth="13" />
        <path d="M39.500 38.500h51v51h-51z" fill="#aeb0b3" stroke="#7d8084" strokeWidth="2" />
        <path d="M49 48h32v32H49z" fill="#9fa3a8" />
        <g fontFamily="Liberation Sans" fontWeight="700" textAnchor="middle">
          <text x="65" y="68" fontSize="12" fill="#4d5359">
            TOP
          </text>
          <g fontSize="22" fill="#9b9ea2">
            <text x="65" y="16">
              N
            </text>
            <text x="65" y="128">
              S
            </text>
            <text x="10" y="72">
              W
            </text>
            <text x="121" y="72">
              E
            </text>
          </g>
        </g>
      </Svg>
      <button className="mt-[21px] flex h-[18px] w-12 items-center justify-between rounded-[4px] border border-[#7e7f8c] bg-[#9596a3] px-1 font-['Liberation_Sans',sans-serif] text-[10px] text-[#5c5e69]">
        WCS
        <Svg w={9} h={5}>
          <path d="M1 0h7L4.500 4z" stroke="#b9bac6" />
        </Svg>
      </button>
    </div>
  );
}

const dim = "#43484e";

function NavBar() {
  return (
    <div className="absolute right-[2px] top-[212px] flex w-[34px] flex-col items-center rounded-[4px] bg-[#5b6066]">
      <button aria-label="Close navigation bar" className="ml-auto mr-[2px] mt-px">
        <Svg w={9}>
          <circle cx="4.500" cy="4.500" r="4" fill={dim} />
          <path d="m3 3 3 3M6 3 3 6" stroke="#6d7278" />
        </Svg>
      </button>
      <button aria-label="Steering wheel" className="mt-2 flex flex-col items-center gap-2">
        <Svg w={24}>
          <path d="M12 1h8c2 0 3 1 3 3v8a11 11 0 1 1-11-11z" stroke={dim} strokeWidth="1.500" />
          <circle cx="12" cy="12" r="6" stroke={dim} strokeWidth="1.500" />
          <circle cx="12" cy="12" r="8.500" stroke={dim} strokeDasharray="9 4" />
        </Svg>
        <Caret color={dim} w={6} />
      </button>
      <span className="mt-1 h-px w-7 bg-[#6a6c6a]" />
      <button aria-label="Pan" className="mt-[2px]">
        <Svg w={24}>
          <path
            d="M8 22c-2-3-6-7-7-10 1-2 3 0 5 2L4 5c1-2 2-1 3 0l2 6-.500-9c1-2 2-1 2.500 0l1 8 1.500-8c1-1 2-1 2 .5L15 11l3-6c1-1 2 0 2 1l-3 9c0 3-1 5-2 7z"
            stroke={dim}
            strokeWidth="1.500"
          />
        </Svg>
      </button>
      <button aria-label="Zoom" className="mt-1 flex flex-col items-center gap-[6px]">
        <Svg w={24}>
          <path d="m2 2 14 13M16 2 2 15" stroke={dim} strokeWidth="1.500" />
          <path d="M0 0h6L0 6zM18 0v6l-6-6zM0 17v-6l6 6z" fill={dim} />
          <circle cx="16" cy="15" r="5" fill="#5b6066" stroke={dim} strokeWidth="1.500" />
          <path d="m20 19 4 4" stroke={dim} strokeWidth="2.500" />
        </Svg>
        <Caret color={dim} w={6} />
      </button>
      <button aria-label="Orbit" className="mt-1 flex flex-col items-center gap-[6px]">
        <Svg w={24}>
          <path d="M10 23V7H7l5-6 5 6h-3v16z" stroke={dim} strokeWidth="1.500" />
          <path d="M10 10c-5 0-9 1-9 4s5 4 11 4 11-1 11-4-4-4-9-4" stroke={dim} strokeWidth="1.500" />
          <path d="M8 14v8l-6-4z" fill={dim} />
        </Svg>
        <Caret color={dim} w={6} />
      </button>
      <span className="mt-1 h-px w-7 bg-[#6a6c6a]" />
      <button aria-label="ShowMotion" className="mt-1">
        <Svg w={24}>
          <path d="M1 1h6v6H1zM9 1h6v6H9zM17 1h6v6h-6zM1 10h16v12H1z" stroke={dim} strokeWidth="1.500" />
          <path d="m6 12 7 4-7 4z" fill={dim} />
        </Svg>
      </button>
      <button aria-label="Navigation bar options" className="mb-[2px] ml-auto mr-[2px] mt-[7px]">
        <Svg w={9}>
          <circle cx="4.500" cy="4.500" r="4" fill={dim} />
          <path d="M2.500 3.500h4M2.500 5.500h4" stroke="#6d7278" />
        </Svg>
      </button>
    </div>
  );
}

function CommandLine() {
  return (
    <div className="absolute inset-x-[327px] bottom-px flex h-[25px]">
      <div className="flex w-14 items-center bg-[#2b303c] pl-1">
        <Svg w={6} h={18}>
          <path d="M1 0v18M4.500 0v18" stroke="#b5b7ba" strokeWidth="2" strokeDasharray="2 1" />
        </Svg>
        <button aria-label="Close command line" className="ml-1">
          <Svg w={10}>
            <path d="m1 1 8 8M9 1 1 9" stroke="#b5b7ba" strokeWidth="2" />
          </Svg>
        </button>
        <button aria-label="Customize" className="ml-[11px]">
          <Svg w={15}>
            <path d="m1 14 8-8" stroke="#b5b7ba" strokeWidth="3" />
            <path d="M7 5c0-3 2-5 5-5l-2 3 2 2 3-1c0 4-3 5-5 5z" fill="#b5b7ba" />
          </Svg>
        </button>
      </div>
      <label className="flex flex-1 items-center rounded-r-[2px] bg-[#bdbec0] pl-1 pr-[3px]">
        <Svg w={16} h={12}>
          <path d="M1 1h14v10H1z" stroke="#55585c" strokeWidth="1.500" />
          <path d="M1 1.500h14M3 4l3 2-3 2M7 8.500h4" stroke="#55585c" strokeWidth="1.200" />
        </Svg>
        <span className="ml-[3px]">
          <Caret color="#55585c" />
        </span>
        <input
          aria-label="Command"
          placeholder="Type a command"
          className="ml-[6px] flex-1 bg-transparent font-['DejaVu_Sans_Mono',monospace] text-[12px] italic placeholder:text-[#6a6c6f]"
        />
        <Svg w={7} h={4} box="0 0 8 4">
          <path d="m4 0 4 4H0z" fill="#55585c" />
        </Svg>
      </label>
    </div>
  );
}

function Canvas() {
  return (
    <main className="relative min-w-0 flex-1 bg-[#212830]">
      <p className="absolute left-[3px] top-[6px] text-[12px] text-[#d9dadb]">[−][Top][2D Wireframe]</p>
      <Svg w={97} className="absolute left-[750px] top-[380px]">
        <path d="M0 48.500h45M52 48.500h45M48.500 0v45M48.500 52v45M45.500 45.500h6v6h-6z" stroke="#fff" />
      </Svg>
      <Svg w={73} h={74} className="absolute bottom-[14px] left-[15px]">
        <path
          d="m7 .5 6 6 6-6M13 6.500V13M5.500 18v49M5.500 67.500H54M1.500 62.500h9v9h-9zM59 53l12 13M71 53 59 66"
          stroke="#fff"
        />
      </Svg>
      <ViewCube />
      <NavBar />
      <CommandLine />
    </main>
  );
}

/* transparent command toolbar */

const Pt = ({ x = 8, y = 8 }) => (
  <g transform={`translate(${x} ${y})`}>
    <path d="M0-5v10M-5 0H5" stroke={LIGHT} />
    <circle r="2.500" fill={PANEL} stroke={LIGHT} strokeWidth="1.500" />
  </g>
);
const Cursor = ({ x = 8, y = 6 }) => <path transform={`translate(${x} ${y})`} d="M0 0l8 8H5l2 4-2 1-2-4-3 2z" fill="#fff" />;
const Hash = () => <path d="M12.500 11v7M15.500 11v7M10 13.500h8M10 16.500h8" stroke={BLUE} />;
const Funnel = () => <path d="M0 8h8l-3 4v5H3v-5z" fill={LIGHT} />;
const GridTag = () => (
  <g>
    <path d="M9.500 9.500h8v8h-8z" fill={PANEL} stroke={LIGHT} />
    <path d="M9.500 13.500h8M13.500 9.500v8" stroke={LIGHT} />
  </g>
);
const Curve = () => <path d="M7 10c4 0 7 1 8 3s-3 4-8 4" stroke={BLUE} strokeWidth="1.500" strokeDasharray="4 1.500" />;
const Eraser = () => <path d="m9 12 4-4 4 4-4 5z" fill={YELLOW} stroke="#fff" />;

type Tool = [string, ReactNode];

const toolGroups: Tool[][] = [
  [
    ["Angle distance", <g key="1"><path d="M2 17V2h14" stroke="#fff" strokeWidth="1.500" /><path d="M4 4h9L4 12z" fill={LIGHT} /><path d="M13 4c0 4-3 7-8 8" stroke={BLUE} strokeWidth="1.500" /></g>],
    ["Bearing distance", <g key="2"><path d="M1.500 1v15.500H18" stroke={LIGHT} strokeDasharray="2 1" /><path d="m3 3 9 6-9 6z" fill={LIGHT} /><path d="M3 3c4 0 7 2 9 5" stroke={BLUE} /></g>],
    ["Azimuth distance", <g key="3"><path d="M5.500 2v15" stroke={LIGHT} strokeDasharray="2 1" /><path d="m8 4 3 5-3 6z" fill={LIGHT} /><path d="M7 2c7 3 6 10 2 13" stroke={BLUE} strokeWidth="1.500" /></g>],
    ["Deflection distance", <g key="4"><path d="M4.500 2v15" stroke={LIGHT} strokeDasharray="2 1" /><path d="m6 6 8-2-8 9z" fill={LIGHT} /><path d="m5 4 8-1" stroke={BLUE} strokeWidth="1.500" /></g>],
    ["Northing easting", <g key="5"><path d="M1 2h6v6H1zM8 2h3l3 3v3H8zM1 9h6v7H1z" fill={LIGHT} /><GridTag /></g>],
    ["Grid northing easting", <g key="6"><circle cx="8" cy="8" r="7" fill="#4a9fd8" /><path d="M3 4c3-3 6-1 5 2s4 3 3 6-5 1-5-2-4-3-3-6z" fill="#bfe0f7" /><GridTag /></g>],
    ["Latitude longitude", <g key="7"><circle cx="9" cy="9" r="8" fill="#4a9fd8" /><path d="M1 9h16M9 1v16M3 4c4 3 8 3 12 0M3 14c4-3 8-3 12 0" stroke="#d6ecfa" /><path d="M5.500 9.500h3v3h-3zM10.500 5.500h3v3h-3z" fill="#222933" stroke="#fff" /></g>],
    ["Point number", <g key="8"><Pt x={7} y={7} /><Hash /></g>],
    ["Point name", <g key="9"><Pt x={7} y={7} /><path d="m10 17 3-7 3 7M11 15h4" stroke={LIGHT} strokeWidth="1.300" /></g>],
    ["Point object", <g key="10"><Pt x={6} y={6} /><Cursor x={9} y={5} /></g>],
    ["Zoom to point", <g key="11"><Pt x={5} y={6} /><circle cx="11" cy="11" r="3" fill="#8b9099" stroke={LIGHT} /><path d="m13 14 3 3" stroke={YELLOW} strokeWidth="1.500" /></g>],
    ["Side shot", <g key="12"><path d="M3.500 2v15" stroke={LIGHT} strokeDasharray="2 1" /><path d="M6 8h6v6H6z" fill="#8b9099" stroke={LIGHT} /><path d="M7 4h8v8" stroke={BLUE} strokeWidth="1.500" /><path d="m6 14 8-8" stroke={LIGHT} /></g>],
    ["Station offset", <g key="13"><path d="M1 3h9M7 3v14" stroke={BLUE} strokeWidth="1.500" /><path d="M10 4c8 1 8 7 1 9" stroke={LIGHT} strokeWidth="1.500" strokeDasharray="3 1.500" /></g>],
  ],
  [["Filter select", <g key="1"><Pt x={9} y={5} /><Funnel /><Cursor x={9} y={5} /></g>]],
  [
    ["Profile station", <g key="1"><path d="M1 6h12M7 1v9" stroke={BLUE} strokeWidth="1.500" /><path d="M12 6c6 2 6 7 0 9H6" stroke={LIGHT} strokeWidth="1.500" strokeDasharray="3 1.500" /></g>],
    ["Profile surface", <g key="2"><path d="m6 1 5 3-1 6H2L1 4z" fill={LIGHT} /><Curve /></g>],
    ["Profile point", <g key="3"><Pt x={6} y={6} /><Curve /></g>],
  ],
  [
    ["Grade station", <g key="1"><path d="M2 2v14h15" stroke={LIGHT} strokeWidth="1.500" strokeDasharray="2 1" /><path d="M4 6h6v6" stroke={BLUE} strokeWidth="1.500" /><path d="M9 5h3v3H9z" fill="#fff" /></g>],
    ["Grade elevation", <g key="2"><path d="M4 4v12h13M1 5l5-4M3 1h3v3" stroke={LIGHT} strokeWidth="1.300" strokeDasharray="3 1" /><path d="m6 14 7-9v9" stroke={BLUE} strokeWidth="1.500" /></g>],
    ["Grade length", <g key="3"><path d="M2 2v14h15" stroke={LIGHT} strokeWidth="1.500" strokeDasharray="2 1" /><path d="M4 6h6l-6 8" stroke={BLUE} strokeWidth="1.500" /><path d="m11 14 4-4h-3M15 10v3" stroke={LIGHT} /></g>],
    ["Length elevation", <g key="4"><path d="m1 7 5-5H3M6 2v3M5 15h12M7 13l-2 2 2 2M15 13l2 2-2 2" stroke={LIGHT} /><path d="m2 15 8-8" stroke={BLUE} strokeWidth="1.500" /><path d="M10 4h2v3h-2z" fill="#fff" /></g>],
    ["Match radius", <g key="5"><circle cx="8" cy="8" r="7" stroke={LIGHT} strokeWidth="1.500" /><path d="m8 8-3-3" stroke={LIGHT} /><Eraser /></g>],
    ["Match length", <g key="6"><path d="M1 14 13 3M0 11l4 5M10 1l4 5" stroke={LIGHT} strokeWidth="1.500" /><Eraser /></g>],
    ["Curve calculator", <g key="7"><path d="M1 16C2 8 6 3 15 2" stroke={LIGHT} strokeWidth="1.500" strokeDasharray="4 2" /><path d="M9 8h8v9H9z" fill="#fff" /><path d="M10 9h6v2h-6zM10 12h2v1h-2zM13 12h2v1h-2zM10 14h2v1h-2zM13 14h2v1h-2z" fill="#1c87e0" /></g>],
  ],
];

const filterTools: Tool[] = [
  ["Filter point object", <g key="1"><Pt x={7} y={5} /><Funnel /><Cursor x={9} y={5} /></g>],
  ["Filter northing", <g key="2"><path d="M3 0h6v6H3zM10 0l4 4v3h-4z" fill={LIGHT} /><Funnel /><GridTag /></g>],
  ["Filter point number", <g key="3"><Pt x={8} y={5} /><Funnel /><Hash /></g>],
];

const Grip = () => (
  <div className="flex h-2 items-center justify-center">
    <Svg w={14} h={4}>
      <path d="M0 .5h14M0 3.500h14" stroke="#c3c6ca" strokeDasharray="1 1" />
    </Svg>
  </div>
);

const ToolButton = ({ tool: [name, art] }: { tool: Tool }) => (
  <button aria-label={name} className="flex h-[22px] w-full items-center justify-center">
    <Svg w={18}>{art}</Svg>
  </button>
);

function SideToolbar() {
  return (
    <aside className="w-[33px] shrink-0 pl-[3px]">
      <div className="w-[25px] border-x border-b border-[#222933]">
        <Grip />
        {toolGroups.map((group, i) => (
          <div key={i}>
            {i > 0 && <div className="mx-[2px] my-[2px] h-[2px] bg-[#e6e6e6]" />}
            {group.map((t) => (
              <ToolButton key={t[0]} tool={t} />
            ))}
          </div>
        ))}
      </div>
      <div className="mt-px w-[25px] border border-[#222933]">
        <Grip />
        {filterTools.map((t) => (
          <ToolButton key={t[0]} tool={t} />
        ))}
      </div>
    </aside>
  );
}

/* status bar */

function Cell({ name, w = "w-6", on, children }: { name: string; w?: string; on?: boolean; children: ReactNode }) {
  return (
    <button
      aria-label={name}
      className={`${w} flex h-6 shrink-0 items-center justify-center ${on ? "bg-[#5e8cc0]" : ""}`}
    >
      {children}
    </button>
  );
}

const Drop = ({ name }: { name: string }) => (
  <Cell name={name} w="w-4">
    <Caret w={6} />
  </Cell>
);

const Group = ({ children }: { children: ReactNode }) => <div className="flex gap-px bg-[#3b4453]">{children}</div>;

const Scale = ({ extra }: { extra?: ReactNode }) => (
  <Svg w={18}>
    <path d="m8 1 3 8 4 7-5-3H6l-5 3 4-7z" fill={LIGHT} />
    <path d="M8 11v6" stroke={PANEL} />
    {extra}
  </Svg>
);

function StatusBar() {
  return (
    <footer className="flex h-[29px] shrink-0 border-t border-[#3b4453]">
      <div className="flex text-[#a9acb1]">
        <button className="ml-1 flex h-[17px] w-[54px] justify-center rounded-b-[10px] bg-[#3b4453] font-bold leading-[15px] text-white">
          Model
        </button>
        <button className="ml-1 flex h-[17px] w-[60px] justify-center rounded-b-[10px] bg-[#2e3440] leading-[15px]">Layout1</button>
        <button className="ml-1 flex h-[17px] w-[61px] justify-center rounded-b-[10px] bg-[#2e3440] leading-[15px]">Layout2</button>
        <button aria-label="New layout" className="ml-[7px] flex h-4 w-[22px] items-center justify-center rounded-b-[8px] bg-[#2e3440]">
          <Svg w={9}>
            <path d="M4.500 0v9M0 4.500h9" stroke="#a9acb1" strokeWidth="2" />
          </Svg>
        </button>
      </div>
      <div className="ml-auto mr-[3px] mt-px flex h-6 gap-[3px] text-[#e6e7e8]">
        <button className="w-[47px] bg-[#3b4453]">MODEL</button>
        <Group>
          <Cell name="Grid" w="w-[22px]">
            <Svg>
              <path d="M4.500 0v16M8.500 0v16M12.500 0v16M0 3.500h16M0 7.500h16M0 11.500h16" stroke={LIGHT} />
            </Svg>
          </Cell>
          <Cell name="Snap mode">
            <Svg w={14}>
              <path d="M1 2h12M1 7h12M1 12h12" stroke={LIGHT} strokeWidth="2" strokeDasharray="2 3" />
            </Svg>
          </Cell>
          <Drop name="Snap options" />
        </Group>
        <Group>
          <Cell name="Ortho mode">
            <Svg>
              <path d="M1 0v15h15M1 10h5v5" stroke={LIGHT} strokeWidth="1.200" />
            </Svg>
          </Cell>
          <Cell name="Polar tracking" w="w-[22px]" on>
            <Svg w={18}>
              <path d="M14 12A7 7 0 1 1 11 2.500M8 9h10M8 9l8-8M11 6c2 1 2 4 1 6" stroke="#fff" strokeWidth="1.300" />
            </Svg>
          </Cell>
          <Drop name="Polar options" />
          <Cell name="Isometric drafting" w="w-[22px]">
            <Svg>
              <path d="m2 1 12 14" stroke={RED} />
              <path d="M8 0v16" stroke={GREEN} strokeWidth="1.500" />
              <path d="M6.500 6.500h3v3h-3z" fill={PANEL} stroke="#fff" />
            </Svg>
          </Cell>
          <Drop name="Isometric options" />
          <Cell name="Object snap tracking" w="w-[22px]" on>
            <Svg>
              <path d="M14 0 1 14h15" stroke="#fff" strokeWidth="1.300" />
              <path d="M5 8h3v3H5z" fill="#fff" />
            </Svg>
          </Cell>
          <Cell name="Object snap" w="w-[22px]" on>
            <Svg w={17}>
              <path d="M4 4h12v12H4z" stroke="#fff" />
              <path d="M1 1h4v4H1z" fill="#5e8cc0" stroke="#fff" />
            </Svg>
          </Cell>
          <Drop name="Object snap options" />
        </Group>
        <Group>
          <Cell name="Annotation visibility" w="w-[22px]" on>
            <Scale extra={<circle cx="14" cy="3" r="2" stroke="#fff" />} />
          </Cell>
          <Cell name="AutoScale">
            <Scale extra={<path d="m15 0-4 5h3l-2 4 5-5h-3z" fill={LIGHT} stroke={PANEL} strokeWidth=".4" />} />
          </Cell>
          <Cell name="Annotation scale icon">
            <Scale />
          </Cell>
          <button className="flex w-[55px] items-center justify-center gap-[5px]">
            1:1000
            <Caret w={6} />
          </button>
        </Group>
        <div className="flex gap-px">
          <div className="flex bg-[#3b4453]">
            <Cell name="Workspace switching">
              <Svg>
                <Gear />
              </Svg>
            </Cell>
            <Drop name="Workspace options" />
          </div>
          <div className="bg-[#3b4453]">
            <Cell name="Annotation monitor">
              <Svg>
                <path d="M8 0v16M0 8h16" stroke={LIGHT} strokeWidth="2" />
              </Svg>
            </Cell>
          </div>
        </div>
        <div className="flex gap-px">
          <button className="flex w-[67px] items-center justify-center gap-[9px] bg-[#3b4453]">
            <Svg w={16} h={18}>
              <path d="m1 12 7 4 7-4v2l-7 4-7-4z" fill={LIGHT} />
              <path d="m8 5 7 4-7 4-7-4z" fill="#64b5f0" />
              <path d="M2 4c2-4 10-4 12 0" stroke={LIGHT} strokeDasharray="2 1" />
            </Svg>
            3.500
          </button>
          <div className="bg-[#3b4453]">
            <Cell name="Isolate objects">
              <Svg>
                <path d="M1 1h5v5H1zM8 10l3 5H5z" stroke={LIGHT} strokeWidth="1.200" />
                <circle cx="13" cy="8" r="2.500" stroke={LIGHT} strokeWidth="1.200" />
              </Svg>
            </Cell>
          </div>
        </div>
        <Group>
          <Cell name="Clean screen">
            <Svg w={16} h={12}>
              <path d="M.5.5h15v11H.5zM4 6v3h3M9 3h3v3M4 9l3-3M12 3 9 6" stroke={LIGHT} strokeWidth="1.200" />
            </Svg>
          </Cell>
          <Cell name="Customization">
            <Svg w={16} h={14}>
              <path d="M0 1h16M0 7h16M0 13h16" stroke={LIGHT} strokeWidth="2" />
            </Svg>
          </Cell>
        </Group>
      </div>
    </footer>
  );
}

/* Windows taskbar */

function Taskbar() {
  return (
    <div className="flex h-[33px] shrink-0 flex-col border-t-[3px] border-[#3b4453]">
      <div className="h-[2px] bg-[#1b2530]" />
      <div className="relative flex h-7 items-start overflow-hidden border-t border-[#8fc3e0] bg-[linear-gradient(90deg,#2f7fb0_0,#2a86c2_5%,#3f9fd8_14%,#3b9bd6_26%,#48a8da_32%,#3195d1_42%,#2b84c8_50%,#2a7cc6_58%,#2172b9_66%,#1c61a8_82%,#15477f_85%,#14406f_100%)]">
        <div className="absolute left-[1307px] top-0 h-7 w-5 skew-x-[55deg] bg-[#a5d2fa] blur-[3px]" />
        <button aria-label="Start" className="shrink-0">
          <Svg w={30} h={32}>
            <circle cx="14" cy="17" r="15" fill="#1d4468" stroke="#9fb8cc" />
            <path d="M2 10c4-9 20-9 24 0-6-3-18-3-24 0z" fill="#8fa6ba" />
            <path d="M5 11c3-2 5-2 8-1l-1 8c-3-1-5-1-8 1z" fill="#f0642e" />
            <path d="M14 11c3 1 5 1 8-1l-1 8c-3 2-5 2-8 1z" fill="#8cc63f" />
            <path d="M4 20c3-2 5-2 8-1l-1 8H3z" fill="#3fa9e8" />
            <path d="M13 20c3 1 5 1 8-1l-1 8h-8z" fill="#fdc82f" />
          </Svg>
        </button>
        <button aria-label="Internet Explorer" className="ml-[28px] pt-[2px]">
          <Svg w={32} h={32}>
            <circle cx="16" cy="17" r="10" stroke="#7fd4fb" strokeWidth="6" />
            <path d="M9 17h17" stroke="#7fd4fb" strokeWidth="4" />
            <path d="M26 18h4v7h-6z" fill="#3b9bd6" />
            <path d="M3 28C-2 20 20-2 28 2c3 2 1 6-1 9" stroke="#f7c92b" strokeWidth="2.500" />
          </Svg>
        </button>
        <button aria-label="Explorer" className="ml-[29px] pt-[5px]">
          <Svg w={32} h={28}>
            <path d="M1 1h9l2 3h19v26H1z" fill="#f0d98a" />
            <path d="M4 1h4v2H4z" fill="#3fae4a" />
            <path d="M12 4h5v2h-5z" fill="#e05040" />
            <path d="M20 6h6v2h-6z" fill="#3b8fd6" />
            <path d="M1 9h30v20H1z" fill="#fbecb0" />
            <path d="M7 17h20v12H7z" fill="#a6dcf2" />
          </Svg>
        </button>
        <button aria-label="Media Player" className="ml-[32px] pt-2">
          <Svg w={26} h={28}>
            <path d="M0 0h21v26H0z" fill="#8fc1de" />
            <path d="M22 1v26M24.500 2v26" stroke="#b5d8ec" />
            <circle cx="11" cy="12" r="9" fill="#ef7d22" />
            <path d="m8 6 9 6-9 6z" fill="#fff" />
          </Svg>
        </button>
        <button
          aria-label="Coc Coc"
          className="ml-[21px] flex h-8 w-[54px] justify-center border border-[#1d4f75] bg-linear-to-br from-[#c3e2f0] to-[#7fbcdb] pt-[3px]"
        >
          <Svg w={32} h={32}>
            <circle cx="15" cy="16" r="10" stroke="#5fb54a" strokeWidth="10" />
            <path d="M16 0h16v14H20z" fill="#b5d8ea" />
            <circle cx="15" cy="16" r="7" fill="#fff" />
            <circle cx="15" cy="16" r="4.500" fill="#5fb54a" />
            <path d="m17 1-1 8M25 2l-6 8M30 8l-8 4" stroke="#f07522" strokeWidth="3" />
          </Svg>
        </button>
        <div className="h-8 w-1 border-r border-[#1d4f75] bg-[#6db2da]" />
        <button aria-label="Opera" className="ml-[17px] pt-1">
          <Svg w={30} h={32}>
            <path
              d="M15 0a15 15 0 0 1 0 30a15 15 0 0 1 0-30zM15 4c-4 0-6 5-6 11s2 11 6 11 7-5 7-11-3-11-7-11z"
              fill="#d4141e"
              fillRule="evenodd"
            />
          </Svg>
        </button>
        <button aria-label="Chromium" className="ml-[33px] pt-1">
          <Svg w={30} h={32}>
            <circle cx="15" cy="15" r="15" fill="#8fb4f2" />
            <path d="M2 8C8-3 23-3 28 8H15z" fill="#3f6fd0" />
            <path d="M2 8c-4 8 0 18 10 22l5-9z" fill="#6a97ea" />
            <circle cx="15" cy="15" r="7" fill="#e8f0fd" />
            <circle cx="15" cy="15" r="5.500" fill="#4d82de" />
          </Svg>
        </button>
        <button
          aria-label="Civil 3D"
          className="ml-[18px] flex h-8 w-[58px] justify-center border border-[#123a5c] bg-linear-to-br from-[#d8edf6] to-[#8cc4df] pt-[3px]"
        >
          <Svg w={32} h={32}>
            <path d="M0 0h32v32H0z" fill="#dcebf3" />
            <path d="M25 5v7h-4c0-3-6-3-7 3s4 7 6 3h5c-1 7-17 9-17-3S19 0 25 5z" fill="#1f86b8" />
            <path d="M25 5c-6-5-17-1-17 10 2-6 7-9 12-8l5 3z" fill="#46b0dc" />
          </Svg>
        </button>
        <div className="ml-auto flex items-start gap-2 text-white">
          <span className="mr-3 pt-2">EN</span>
          <button aria-label="Show hidden icons" className="pt-4">
            <Svg w={7} h={5}>
              <path d="M3.500 0 7 5H0z" fill="#fff" />
            </Svg>
          </button>
          <Svg w={16} h={18} className="ml-1 mt-3 shrink-0">
            <path d="M2 0v17" stroke="#fff" strokeWidth="2" />
            <path d="M3 1c4-1 5 2 10 1v8c-5 1-6-2-10-1z" fill="#fff" />
            <circle cx="11" cy="12" r="5" fill="#e0352b" />
            <path d="m9 10 4 4M13 10l-4 4" stroke="#fff" strokeWidth="1.500" />
          </Svg>
          <Svg w={16} h={18} className="mt-3 shrink-0">
            <path d="m4 0 3 2-3 2-3-2zM11 0l3 2-3 2-3-2zM4 5l3 2-3 2-3-2zM11 5l3 2-3 2-3-2z" fill="#8b96a5" />
            <circle cx="11" cy="12" r="5" fill="#e0352b" />
            <path d="m9 10 4 4M13 10l-4 4" stroke="#fff" strokeWidth="1.500" />
          </Svg>
          <Svg w={15} h={18} className="mt-3 shrink-0">
            <path d="M1 2h8v14H1z" stroke="#fff" strokeWidth="1.500" />
            <path d="M6 4h8v4l-2 3v4H9v-4L6 8zM8 1v3M12 1v3" fill="#fff" stroke="#fff" />
          </Svg>
          <Svg w={15} h={18} className="mt-3 shrink-0">
            <path d="M0 12h2v3H0zM3 10h2v5H3zM6 8h2v7H6zM9 5h2v10H9zM12 2h2v13h-2z" fill="#fff" />
          </Svg>
          <Svg w={15} h={18} className="mt-3 shrink-0">
            <path d="M0 6h3l4-4v14l-4-4H0z" fill="#fff" />
            <path d="M9 6c1 2 1 4 0 6M11 4c2 3 2 7 0 10" stroke="#fff" />
          </Svg>
          <time className="ml-2 w-[64px] pt-[3px] text-center leading-4">
            6:28 CH
            <br />
            14/04/2019
          </time>
          <button aria-label="Show desktop" className="h-8 w-[9px] border-l border-[#7d9cbd] bg-[#2a5280]" />
        </div>
      </div>
    </div>
  );
}

export default function App() {
  return (
    <div className="flex h-screen flex-col overflow-hidden bg-[#222933] font-['Open_Sans','Noto_Sans',sans-serif] text-[11px] leading-4">
      <Header />
      <RibbonTabs />
      <Ribbon />
      <DocTabs />
      <div className="flex min-h-0 flex-1 bg-[#3b4453]">
        <Toolspace />
        <Canvas />
        <SideToolbar />
      </div>
      <StatusBar />
      <Taskbar />
    </div>
  );
}
